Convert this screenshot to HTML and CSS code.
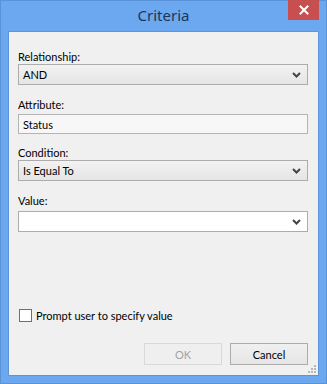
FILE: index.html
```html
<!DOCTYPE html>
<html>
<head>
<meta charset="utf-8">
<link rel="stylesheet" href="styles.css">
</head>
<body>
<div class="window">
  <div class="titlebar">
    <div class="title">Criteria</div>
    <div class="close">
      <svg width="10" height="10" viewBox="0 0 10 10"><path d="M1.5 1.5 L8.5 8.5 M8.5 1.5 L1.5 8.5" stroke="#fff" stroke-width="2" stroke-linecap="square"/></svg>
    </div>
  </div>
  <div class="content">
    <div class="group">
      <div class="label">Relationship:</div>
      <div class="combo">
        <span>AND</span>
        <svg class="chev" width="9" height="6" viewBox="0 0 9 6"><path d="M1 1 L4.5 4.5 L8 1" fill="none" stroke="#444" stroke-width="2"/></svg>
      </div>
    </div>
    <div class="group">
      <div class="label">Attribute:</div>
      <div class="textbox"><span>Status</span></div>
    </div>
    <div class="group">
      <div class="label">Condition:</div>
      <div class="combo">
        <span>Is Equal To</span>
        <svg class="chev" width="9" height="6" viewBox="0 0 9 6"><path d="M1 1 L4.5 4.5 L8 1" fill="none" stroke="#444" stroke-width="2"/></svg>
      </div>
    </div>
    <div class="group">
      <div class="label">Value:</div>
      <div class="editcombo">
        <span></span>
        <svg class="chev" width="9" height="6" viewBox="0 0 9 6"><path d="M1 1 L4.5 4.5 L8 1" fill="none" stroke="#444" stroke-width="2"/></svg>
      </div>
    </div>
    <div class="spacer"></div>
    <div class="check-row">
      <div class="checkbox"></div>
      <span>Prompt user to specify value</span>
    </div>
    <div class="buttons">
      <div class="btn disabled">OK</div>
      <div class="btn">Cancel</div>
    </div>
    <div class="grip">
      <svg width="8" height="8" viewBox="0 0 8 8" fill="#b8b8b8">
        <rect x="6" y="0" width="2" height="2"/>
        <rect x="3" y="3" width="2" height="2"/><rect x="6" y="3" width="2" height="2"/>
        <rect x="0" y="6" width="2" height="2"/><rect x="3" y="6" width="2" height="2"/><rect x="6" y="6" width="2" height="2"/>
      </svg>
    </div>
  </div>
</div>
</body>
</html>
```
FILE: styles.css
```css
html, body {
  margin: 0;
  padding: 0;
}
body {
  width: 327px;
  height: 384px;
  overflow: hidden;
  font-family: Lato, "Noto Sans", sans-serif;
  font-size: 11px;
  color: #000;
}
.window {
  box-sizing: border-box;
  width: 327px;
  height: 384px;
  background: #6ca8ef;
  border: 1px solid #5b93d8;
  display: flex;
  flex-direction: column;
  padding: 0 7px 7px 7px;
}
.titlebar {
  height: 30px;
  position: relative;
  display: flex;
  align-items: center;
  justify-content: center;
}
.title {
  font-family: "Noto Sans", sans-serif;
  font-size: 15px;
  color: #1d3557;
  padding-bottom: 2px;
}
.close {
  position: absolute;
  top: -1px;
  right: 0;
  width: 31px;
  height: 20px;
  background: #c74f4f;
  display: flex;
  align-items: center;
  justify-content: center;
}
.content {
  flex: 1;
  background: #f0f0f0;
  border: 1px solid #5d95da;
  display: flex;
  flex-direction: column;
  padding: 17px 10px 10px 9px;
  position: relative;
}
.group {
  height: 48px;
  display: flex;
  flex-direction: column;
}
.label {
  height: 15px;
  line-height: 15px;
  color: #000;
}
.combo, .editcombo, .textbox {
  box-sizing: border-box;
  display: flex;
  align-items: center;
  justify-content: space-between;
  padding: 0 6px 0 4px;
}
.combo {
  height: 21px;
  border: 1px solid #acacac;
  background: linear-gradient(#f2f2f2, #e5e5e5);
}
.textbox {
  margin-top: 2px;
  height: 20px;
  border: 1px solid #b4b4b4;
  background: #f7f7f7;
}
.editcombo {
  margin-top: 3px;
  height: 21px;
  border: 1px solid #acacac;
  border-top-color: #abadb3;
  background: #fff;
}
.chev {
  display: block;
}
.spacer {
  flex: 1;
}
.check-row {
  display: flex;
  align-items: center;
  gap: 4px;
  margin-left: 1px;
}
.checkbox {
  box-sizing: border-box;
  width: 13px;
  height: 13px;
  border: 1px solid #707070;
  background: #fff;
}
.buttons {
  display: flex;
  justify-content: flex-end;
  gap: 8px;
  margin-top: 21px;
}
.btn {
  box-sizing: border-box;
  width: 78px;
  height: 22px;
  border: 1px solid #acacac;
  background: linear-gradient(#f0f0f0, #e5e5e5);
  display: flex;
  align-items: center;
  justify-content: center;
}
.btn.disabled {
  border-color: #d9d9d9;
  background: #efefef;
  color: #a3a3a3;
}
.grip {
  position: absolute;
  right: 2px;
  bottom: 2px;
  line-height: 0;
}
```
